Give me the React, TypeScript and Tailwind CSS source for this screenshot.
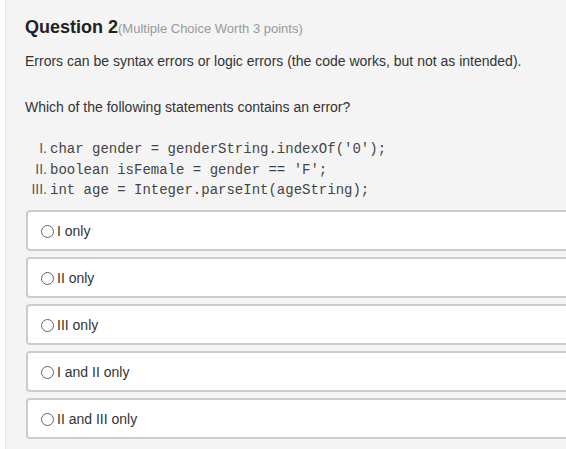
import React from 'react';

const codeLines = [
  { num: 'I.', code: "char gender = genderString.indexOf('0');" },
  { num: 'II.', code: "boolean isFemale = gender == 'F';" },
  { num: 'III.', code: 'int age = Integer.parseInt(ageString);' },
];

const options = ['I only', 'II only', 'III only', 'I and II only', 'II and III only'];

export default function App() {
  return (
    <div className="w-[566px] h-[449px] overflow-hidden bg-white pl-[5px] font-['Liberation_Sans',Arial,sans-serif]">
      <div className="h-full border-l border-[#e4e4e4] bg-[#f4f4f4] pl-[19px] pt-[15px]">
        <h2 className="leading-[24px] text-[#222]">
          <span className="text-[18px] font-bold">Question 2</span>
          <span className="text-[13px] text-[#999]">(Multiple Choice Worth 3 points)</span>
        </h2>
        <p className="mt-[9px] text-[14px] leading-[22.75px] text-[#333]">
          Errors can be syntax errors or logic errors (the code works, but not as intended).
        </p>
        <p className="mt-[22.75px] text-[14px] leading-[22.75px] text-[#333]">
          Which of the following statements contains an error?
        </p>
        <div className="mt-[20px] flex flex-col">
          {codeLines.map((l) => (
            <div key={l.num} className="flex items-baseline h-[20.3px]">
              <span className="w-[22px] text-right text-[14px] text-[#555] leading-[20px]">{l.num}</span>
              <span className="ml-[3px] whitespace-pre font-['Liberation_Mono','Courier_New',monospace] text-[14px] leading-[20px] text-[#444]">
                {l.code}
              </span>
            </div>
          ))}
        </div>
        <div className="mt-[11px] flex flex-col gap-[6px] pl-[1px]">
          {options.map((o) => (
            <div
              key={o}
              className="w-[600px] h-[41px] shrink-0 rounded-[4px] border-2 border-[#cccccc] bg-white flex items-center pl-[13px] pt-[1px]"
            >
              <span className="w-[13px] h-[13px] rounded-full border border-[#666] bg-white" />
              <span className="ml-[3px] text-[14px] leading-[20px] text-[#333]">{o}</span>
            </div>
          ))}
        </div>
      </div>
    </div>
  );
}
